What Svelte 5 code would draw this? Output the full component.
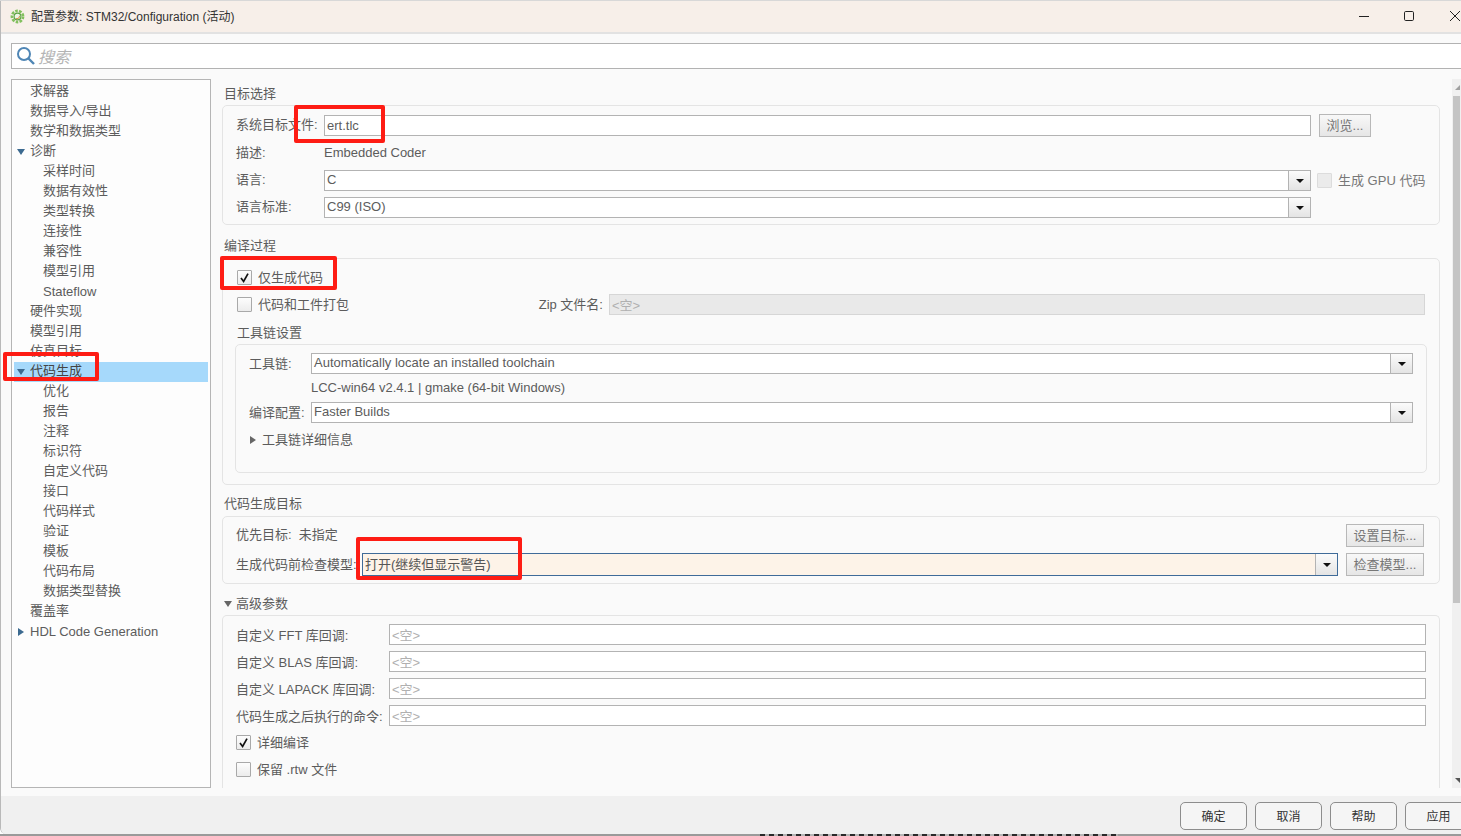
<script>
  const tree = [
    { t: '求解器', l: 0 },
    { t: '数据导入/导出', l: 0 },
    { t: '数学和数据类型', l: 0 },
    { t: '诊断', l: 0, open: true },
    { t: '采样时间', l: 1 },
    { t: '数据有效性', l: 1 },
    { t: '类型转换', l: 1 },
    { t: '连接性', l: 1 },
    { t: '兼容性', l: 1 },
    { t: '模型引用', l: 1 },
    { t: 'Stateflow', l: 1, latin: true },
    { t: '硬件实现', l: 0 },
    { t: '模型引用', l: 0 },
    { t: '仿真目标', l: 0 },
    { t: '代码生成', l: 0, open: true, selected: true },
    { t: '优化', l: 1 },
    { t: '报告', l: 1 },
    { t: '注释', l: 1 },
    { t: '标识符', l: 1 },
    { t: '自定义代码', l: 1 },
    { t: '接口', l: 1 },
    { t: '代码样式', l: 1 },
    { t: '验证', l: 1 },
    { t: '模板', l: 1 },
    { t: '代码布局', l: 1 },
    { t: '数据类型替换', l: 1 },
    { t: '覆盖率', l: 0 },
    { t: 'HDL Code Generation', l: 0, closed: true, latin: true }
  ];

  const advanced = ['自定义 FFT 库回调:', '自定义 BLAS 库回调:', '自定义 LAPACK 库回调:', '代码生成之后执行的命令:'];
</script>

{#snippet combo(value, cls = '')}
  <div class="combo {cls}">
    <span class="combo-value">{value}</span>
    <span class="combo-arrow"><i></i></span>
  </div>
{/snippet}

{#snippet check(label, checked = false)}
  <span class="check">
    <span class="box">
      {#if checked}
        <svg width="13" height="13" viewBox="0 0 13 13"><path d="M3 7l2.6 3.4L10 2.6" fill="none" stroke="#111" stroke-width="1.7"/></svg>
      {/if}
    </span>
    <span class="lbl">{label}</span>
  </span>
{/snippet}

<div class="desk-top"></div>
<div class="window">
  <header class="titlebar">
    <svg class="app-icon" width="15" height="15" viewBox="0 0 15 15">
      <circle cx="7.5" cy="7.5" r="5.6" fill="none" stroke="#82c05e" stroke-width="2.6" stroke-dasharray="2.6 1.3"/>
      <circle cx="7.5" cy="7.5" r="3.4" fill="#eef6e6" stroke="#5fa548" stroke-width="1.2"/>
      <path d="M6 9.5c2 .6 3.4-.5 3.6-2.8" fill="none" stroke="#d09a55" stroke-width="1.1"/>
    </svg>
    <span class="title-text">配置参数: STM32/Configuration (活动)</span>
    <div class="win-controls">
      <svg width="12" height="12" viewBox="0 0 12 12"><path d="M0 6.5h10" stroke="#222" stroke-width="1"/></svg>
      <svg width="12" height="12" viewBox="0 0 12 12"><rect x=".5" y="1.5" width="9" height="9" rx="1.2" fill="none" stroke="#222" stroke-width="1"/></svg>
      <svg width="12" height="12" viewBox="0 0 12 12"><path d="M1 1l10 10M11 1L1 11" stroke="#222" stroke-width="1"/></svg>
    </div>
  </header>

  <div class="search">
    <svg width="20" height="20" viewBox="0 0 20 20">
      <circle cx="8" cy="8" r="6" fill="none" stroke="#4f86b5" stroke-width="2"/>
      <path d="M12.5 12.5L18 18" stroke="#4f86b5" stroke-width="2.4"/>
    </svg>
    <span class="placeholder">搜索</span>
  </div>

  <div class="main">
    <nav class="tree">
      {#each tree as node}
        <div class="node" class:sub={node.l === 1} class:latin={node.latin} class:selected={node.selected}>
          {#if node.open}<i class="tri-down"></i>{/if}
          {#if node.closed}<i class="tri-right"></i>{/if}
          {node.t}
        </div>
      {/each}
    </nav>

    <div class="pane">
      <section class="s1">
        <div class="sec-title">目标选择</div>
        <div class="panel target-grid">
          <span class="cjk">系统目标文件:</span>
          <div class="field"><span>ert.tlc</span></div>
          <div class="extra"><button class="btn browse">浏览...</button></div>

          <span class="cjk">描述:</span>
          <span>Embedded Coder</span>
          <span></span>

          <span class="cjk">语言:</span>
          {@render combo('C')}
          <div class="extra gpu">
            <span class="check disabled"><span class="box"></span><span class="lbl">生成 GPU 代码</span></span>
          </div>

          <span class="cjk">语言标准:</span>
          {@render combo('C99 (ISO)')}
          <span></span>
        </div>
      </section>

      <section class="s2">
        <div class="sec-title">编译过程</div>
        <div class="panel build">
          <div class="check-row">{@render check('仅生成代码', true)}</div>
          <div class="check-row">
            {@render check('代码和工件打包')}
            <span class="zip-label">Zip 文件名:</span>
            <div class="field zip"><span class="empty">&lt;空&gt;</span></div>
          </div>
          <div class="sub-title">工具链设置</div>
          <div class="subpanel">
            <div class="chain-grid">
              <span>工具链:</span>
              {@render combo('Automatically locate an installed toolchain')}
              <span></span>
              <span class="info">LCC-win64 v2.4.1 | gmake (64-bit Windows)</span>
              <span>编译配置:</span>
              {@render combo('Faster Builds')}
            </div>
            <div class="expander"><i class="tri-right small"></i>工具链详细信息</div>
          </div>
        </div>
      </section>

      <section class="s3">
        <div class="sec-title">代码生成目标</div>
        <div class="panel goals">
          <div class="goal-row first">
            <span class="lbl">优先目标:&nbsp; 未指定</span>
            <button class="btn wide">设置目标...</button>
          </div>
          <div class="goal-row">
            <span class="goal-label lbl">生成代码前检查模型:</span>
            {@render combo('打开(继续但显示警告)', 'focused')}
            <button class="btn wide">检查模型...</button>
          </div>
        </div>
      </section>

      <section class="s4">
        <div class="sec-title"><i class="tri-down small"></i>高级参数</div>
        <div class="panel advanced">
          {#each advanced as label}
            <div class="adv-row">
              <span class="adv-label">{label}</span>
              <div class="field"><span class="empty">&lt;空&gt;</span></div>
            </div>
          {/each}
          <div class="adv-checks">
            <div class="check-row">{@render check('详细编译', true)}</div>
            <div class="check-row">{@render check('保留 .rtw 文件')}</div>
          </div>
        </div>
      </section>
    </div>

    <div class="scrollbar">
      <i class="sb-up"></i>
      <div class="sb-thumb"></div>
      <i class="sb-down"></i>
    </div>
  </div>

  <footer class="footer">
    <button class="action">确定</button>
    <button class="action">取消</button>
    <button class="action">帮助</button>
    <button class="action">应用</button>
  </footer>
</div>
<div class="desk-bottom"><i></i></div>

<!-- red annotation boxes drawn over the screenshot -->
<div class="mark m1"></div>
<div class="mark m2"></div>
<div class="mark m3"></div>
<div class="mark m4"></div>

<style>
  :global(body) {
    margin: 0;
    background: #fff;
    overflow: hidden;
  }

  :global(#app) {
    position: relative;
    width: 1461px;
    height: 836px;
    overflow: hidden;
    font-family: "Liberation Sans", "Noto Sans CJK SC", sans-serif;
    font-size: 13px;
    color: #5c5c5c;
  }

  .desk-top { height: 1px; background: #d8d8d8; }

  .window {
    height: 833px;
    background: #fafafa;
    border-left: 1px solid #b9b9b9;
    border-bottom-left-radius: 6px;
    display: flex;
    flex-direction: column;
    overflow: hidden;
    box-sizing: border-box;
  }

  /* the screenshot cuts off whatever was behind the dialog */
  .desk-bottom {
    height: 2px;
    background: #9a9a9a;
    padding-left: 760px;
  }

  .desk-bottom i {
    display: block;
    width: 358px;
    height: 2px;
    background: repeating-linear-gradient(90deg, #2a2a2a 0 5px, #b5b5b5 5px 9px);
  }

  .titlebar {
    height: 31px;
    flex: none;
    background: #f7efe9;
    border-bottom: 2px solid #e2e2e2;
    display: flex;
    align-items: center;
    padding-left: 9px;
    color: #333;
    font-size: 12px;
  }

  .app-icon { margin-right: 6px; }
  .title-text { padding-bottom: 2px; }

  .win-controls {
    margin-left: auto;
    padding-bottom: 2px;
    display: flex;
    gap: 33px;
    align-items: center;
  }

  .search {
    flex: none;
    height: 26px;
    margin: 9px -4px 0 10px;
    background: #fff;
    border: 1px solid #b2b2b2;
    box-sizing: border-box;
    display: flex;
    align-items: center;
    padding-left: 4px;
  }

  .placeholder {
    margin-left: 2px;
    font-style: italic;
    font-size: 16px;
    color: #b4b4b4;
  }

  .main {
    flex: none;
    display: flex;
    height: 709px;
    margin-top: 10px;
  }

  .tree {
    flex: none;
    width: 200px;
    margin-left: 10px;
    box-sizing: border-box;
    border: 1px solid #b5b5b5;
    background: #fdfdfd;
    padding: 2px 2px;
  }

  .node {
    position: relative;
    height: 20px;
    line-height: 18px;
    padding-left: 16px;
    white-space: nowrap;
  }

  .node.latin { line-height: 20px; }
  .node.sub { padding-left: 29px; }
  .node.selected { background: #a6d9fb; color: #444; }

  .tri-down, .tri-right {
    display: block;
    position: absolute;
    width: 0;
    height: 0;
  }

  .node .tri-down {
    left: 3px;
    top: 7px;
    border-left: 4px solid transparent;
    border-right: 4px solid transparent;
    border-top: 6px solid #3c6a90;
  }

  .node .tri-right {
    left: 4px;
    top: 6px;
    border-top: 4px solid transparent;
    border-bottom: 4px solid transparent;
    border-left: 6px solid #3c6a90;
  }

  .pane {
    flex: 1;
    min-width: 0;
    padding: 4px 12px 0 11px;
    overflow: hidden;
  }

  .sec-title {
    position: relative;
    height: 20px;
    line-height: 20px;
    margin-bottom: 2px;
    padding-left: 2px;
  }

  .s1 .sec-title, .s2 .sec-title { line-height: 22px; }
  .s2 .sec-title { margin-bottom: 3px; }
  .s4 .sec-title { margin-bottom: 1px; padding-left: 14px; }

  section { margin-bottom: 10px; }
  .s2 { margin-bottom: 9px; }

  .sec-title .tri-down {
    left: 2px;
    top: 7px;
    border-left: 4px solid transparent;
    border-right: 4px solid transparent;
    border-top: 6px solid #666;
  }

  .panel {
    border: 1px solid #e4e4e4;
    border-radius: 5px;
    box-sizing: border-box;
    padding-left: 13px;
  }

  .lbl { padding-bottom: 2px; }

  .target-grid {
    height: 120px;
    padding-top: 6px;
    padding-right: 13px;
    display: grid;
    grid-template-columns: 88px 987px 1fr;
    grid-template-rows: 27px 28px 27px 27px;
    align-items: center;
  }

  .target-grid > span, .chain-grid > span { padding-bottom: 2px; }
  .target-grid > .cjk { padding-bottom: 4px; }

  .field {
    height: 21px;
    box-sizing: border-box;
    border: 1px solid #b3b3b3;
    background: #fff;
    line-height: 19px;
    padding-left: 2px;
    white-space: nowrap;
  }

  .empty { display: block; padding-top: 1px; color: #b0b0b0; }

  .extra { padding-left: 8px; }
  .gpu { padding-left: 6px; white-space: nowrap; }

  .btn {
    font: inherit;
    color: #777;
    height: 23px;
    padding: 0 0 2px;
    border: 1px solid #b8b8b8;
    background: linear-gradient(#f8f8f8, #e6e6e6);
    box-sizing: border-box;
  }

  .browse { width: 52px; display: block; }
  .wide { width: 78px; flex: none; }

  .combo {
    height: 21px;
    box-sizing: border-box;
    display: flex;
    border: 1px solid #b3b3b3;
    background: #fff;
  }

  .combo-value {
    flex: 1;
    padding-left: 2px;
    line-height: 18px;
    white-space: nowrap;
  }

  .combo-arrow {
    flex: none;
    width: 21px;
    border-left: 1px solid #b3b3b3;
    background: linear-gradient(#fbfbfb, #e4e4e4);
    display: flex;
    align-items: center;
    justify-content: center;
  }

  .combo-arrow i {
    width: 0;
    height: 0;
    border-left: 4px solid transparent;
    border-right: 4px solid transparent;
    border-top: 4px solid #111;
  }

  .combo.focused { border-color: #3f6b99; height: 23px; flex: 1; min-width: 0; background: #fdf3e8; }
  .combo.focused .combo-value { line-height: 22px; color: #555; }

  .check {
    display: inline-flex;
    align-items: center;
    gap: 6px;
  }

  .box {
    width: 15px;
    height: 15px;
    flex: none;
    box-sizing: border-box;
    border: 1px solid #a9a9a9;
    border-radius: 1px;
    background: linear-gradient(#fdfdfd, #ececec);
    display: flex;
    align-items: center;
    justify-content: center;
  }

  .check.disabled .box { border-color: #dcdcdc; background: #ebebeb; }
  .check.disabled { color: #777; }

  .build { height: 227px; padding-top: 5px; padding-right: 14px; }

  .check-row {
    height: 27px;
    display: flex;
    align-items: center;
  }

  .build .check-row { padding-left: 1px; }

  .zip-label { margin-left: auto; padding-bottom: 2px; }

  .zip {
    width: 816px;
    margin-left: 6px;
    background: #e9e9e9;
    border-color: #d6d6d6;
  }

  .sub-title { height: 22px; line-height: 22px; margin-top: 4px; padding-left: 1px; }

  .subpanel {
    margin: 0 -2px 0 -1px;
    height: 129px;
    box-sizing: border-box;
    border: 1px solid #e4e4e4;
    border-radius: 5px;
    padding: 8px 13px 0;
  }

  .chain-grid {
    display: grid;
    grid-template-columns: 62px 1fr;
    grid-template-rows: 21px 28px 21px;
    align-items: center;
  }

  .expander {
    position: relative;
    height: 22px;
    line-height: 22px;
    margin-top: 6px;
    padding-left: 13px;
  }

  .expander .tri-right {
    left: 1px;
    top: 7px;
    border-top: 4px solid transparent;
    border-bottom: 4px solid transparent;
    border-left: 6px solid #666;
  }

  .goals { height: 68px; padding: 7px 15px 0 13px; }

  .goal-row {
    display: flex;
    align-items: center;
    height: 23px;
    justify-content: space-between;
  }

  .goal-row.first .lbl { padding-bottom: 4px; }
  .goal-row.first .btn { padding-bottom: 4px; }
  .goal-row + .goal-row { margin-top: 6px; justify-content: flex-start; }
  .goal-label { width: 126px; flex: none; white-space: nowrap; }
  .goal-row .combo { margin-right: 8px; }

  .advanced {
    height: 190px;
    padding-top: 8px;
    padding-right: 13px;
    border-bottom: none;
  }

  .adv-row {
    display: flex;
    align-items: center;
    height: 21px;
    margin-bottom: 6px;
  }

  .adv-label { width: 153px; flex: none; white-space: nowrap; }
  .adv-row .field { flex: 1; }
  .adv-checks { margin-top: -3px; }

  .scrollbar {
    position: relative;
    flex: none;
    width: 9px;
    background: #f0f0f0;
  }

  .sb-thumb {
    position: absolute;
    top: 17px;
    left: 1px;
    right: 1px;
    height: 507px;
    background: #c4c4c4;
  }

  .sb-up, .sb-down {
    position: absolute;
    right: 1px;
    width: 0;
    height: 0;
  }

  .sb-up { top: 6px; border-left: 5px solid transparent; border-bottom: 5px solid #a0a0a0; }
  .sb-down { bottom: 5px; border-left: 5px solid transparent; border-top: 5px solid #555; }

  .footer {
    flex: none;
    height: 38px;
    margin-top: 8px;
    background: #f0f0f0;
    display: flex;
    justify-content: flex-end;
    align-items: center;
    gap: 8px;
    padding-top: 2px;
    box-sizing: border-box;
    margin-right: -11px;
  }

  .action {
    width: 67px;
    height: 28px;
    font: inherit;
    font-size: 12px;
    color: #333;
    background: #f5f5f5;
    border: 1px solid #8d8d8d;
    border-radius: 5px;
    padding: 0 0 2px;
  }

  .mark {
    position: absolute;
    box-sizing: border-box;
    border: 4px solid #fe1c14;
    border-radius: 2px;
  }

  .m1 { left: 294px; top: 105px; width: 91px; height: 38px; }
  .m2 { left: 220px; top: 256px; width: 117px; height: 34px; }
  .m3 { left: 3px; top: 352px; width: 96px; height: 29px; }
  .m4 { left: 356px; top: 537px; width: 166px; height: 43px; }
</style>
